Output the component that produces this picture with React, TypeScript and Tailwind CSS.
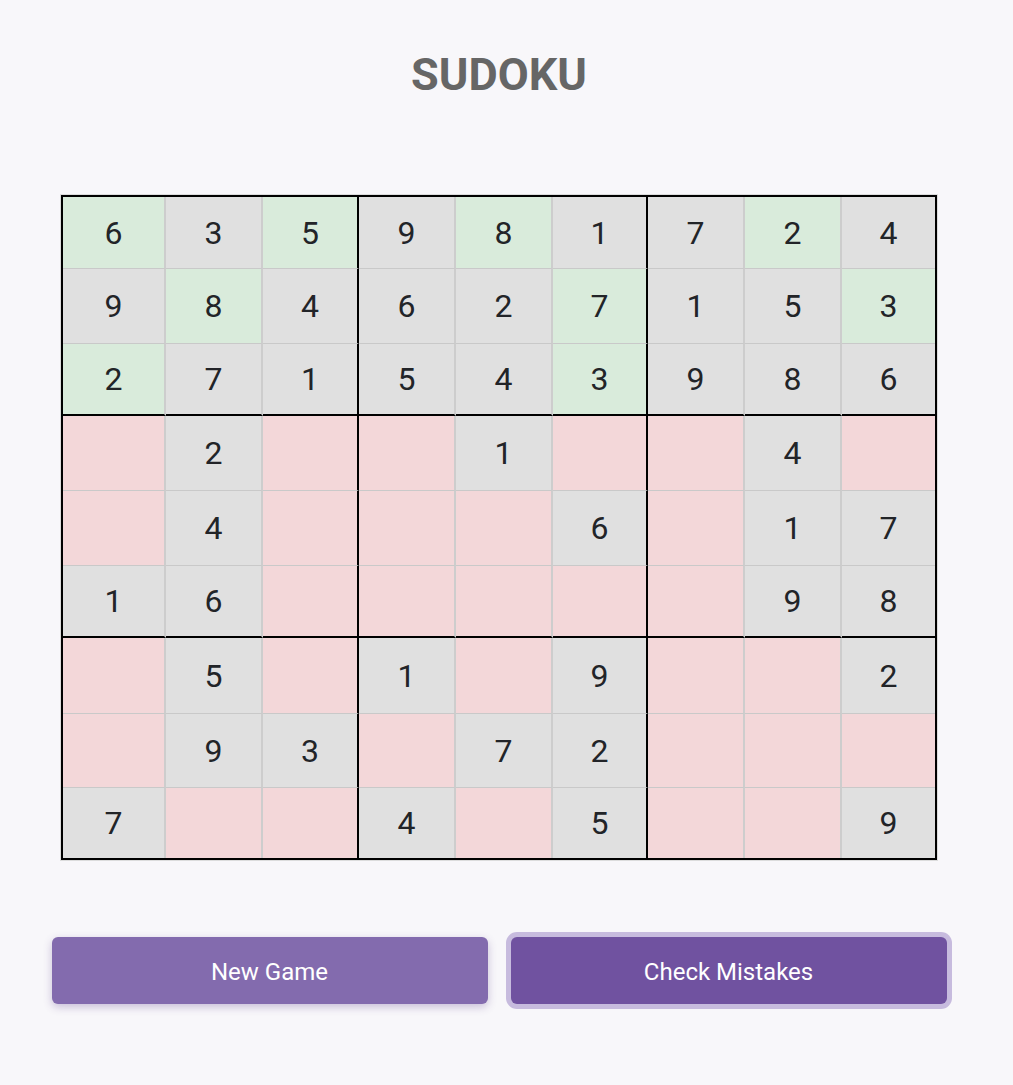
import React from "react";

type Cell = { v: number | null; c: "g" | "n" | "p" };

const raw = [
  "6g 3 5g 9 8g 1 7 2g 4",
  "9 8g 4 6 2 7g 1 5 3g",
  "2g 7 1 5 4 3g 9 8 6",
  "p 2 p p 1 p p 4 p",
  "p 4 p p p 6 p 1 7",
  "1 6 p p p p p 9 8",
  "p 5 p 1 p 9 p p 2",
  "p 9 3 p 7 2 p p p",
  "7 p p 4 p 5 p p 9",
];

const board: Cell[][] = raw.map((r) =>
  r.split(" ").map((t) => {
    if (t === "p") return { v: null, c: "p" };
    if (t.endsWith("g")) return { v: parseInt(t), c: "g" };
    return { v: parseInt(t), c: "n" };
  })
);

const bgClass = { g: "bg-[#d9ebdb]", n: "bg-[#e0e0e0]", p: "bg-[#f3d7d9]" };

export default function App() {
  return (
    <div className="min-h-[1085px] w-full bg-[#f8f7fa]" style={{ fontFamily: "Roboto, 'Liberation Sans', sans-serif" }}>
      <div className="w-[998px] flex flex-col items-center pt-[49px]">
        <h1 className="text-[45px] leading-[52px] font-bold text-[#666666]">SUDOKU</h1>
        <div className="mt-[93px] border border-[#dcdcdc]">
          <div className="border-2 border-black grid grid-cols-[103px_97px_96px_97px_97px_95px_97px_97px_93px] grid-rows-[72px_75px_72px_75px_75px_72px_76px_74px_70px]">
            {board.map((row, r) =>
              row.map((cell, c) => {
                const right =
                  c === 8 ? "" : c === 2 || c === 5 ? "border-r-2 border-r-black" : "border-r-2 border-r-[#cdcdcd]";
                const bottom =
                  r === 8 ? "" : r === 2 || r === 5 ? "border-b-2 border-b-black" : "border-b border-b-[#c9c9c9]";
                return (
                  <div
                    key={`${r}-${c}`}
                    className={`${bgClass[cell.c]} ${right} ${bottom} flex items-center justify-center text-[32px] text-[#222428]`}
                  >
                    {cell.v ?? ""}
                  </div>
                );
              })
            )}
          </div>
        </div>
        <div className="mt-[76px] flex gap-[23px]">
          <button className="w-[436px] h-[67px] pt-[3px] rounded-[6px] bg-[#836bae] text-white text-[24px] shadow-[0_3px_8px_rgba(90,60,140,0.3)]">
            New Game
          </button>
          <button className="w-[436px] h-[67px] pt-[3px] rounded-[6px] bg-[#7052a0] text-white text-[24px] ring-[5px] ring-[#c7bbde]">
            Check Mistakes
          </button>
        </div>
      </div>
    </div>
  );
}
